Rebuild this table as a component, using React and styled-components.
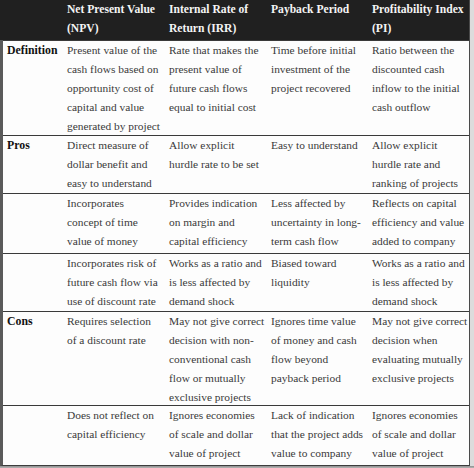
import React from "react";
import styled, { createGlobalStyle } from "styled-components";

const GlobalStyle = createGlobalStyle`
  html, body {
    margin: 0;
    padding: 0;
    background: #ffffff;
    font-family: "Liberation Serif", "Times New Roman", "DejaVu Serif", serif;
  }
`;

const Page = styled.div`
  width: 474px;
  height: 468px;
  overflow: hidden;
  background: linear-gradient(to bottom, #ffffff 0, #ffffff 465px, #8f8f8f 466px, #b5b5b5 468px);
`;

const Table = styled.div`
  width: 470px;
  border-right: 1.5px solid #4a4a4a;
  border-left: 3px solid #5a5a5a;
  border-bottom: 1.5px solid #3c3c3c;
  box-sizing: border-box;
  background: #fdfdfd;
  box-shadow: 4px 0 0 #dcdcdc;
`;

const Row = styled.div`
  display: grid;
  grid-template-columns: 64px 102px 102px 101px 1fr;
  height: ${({ h }) => h}px;
  box-sizing: border-box;
  border-top: ${({ $head }) => ($head ? "none" : "1.5px solid #3a3a3a")};
  background: ${({ $head }) => ($head ? "#202020" : "transparent")};
  margin-left: ${({ $head }) => ($head ? "-3px" : "0")};
  padding-left: ${({ $head }) => ($head ? "3px" : "0")};
`;

const Cell = styled.div`
  white-space: pre-line;
  font-size: ${({ $head }) => ($head ? "11.6px" : "11.4px")};
  line-height: 19px;
  color: ${({ $head }) => ($head ? "#f4f4f4" : "#3a3a3a")};
  font-weight: ${({ $head }) => ($head ? "bold" : "normal")};
`;

const Label = styled.div`
  font-size: 11.8px;
  line-height: 19px;
  font-weight: bold;
  color: #111111;
  padding-left: 4px;
`;

const rows = [
  {
    h: 95,
    label: "Definition",
    cells: [
      "Present value of the\ncash flows based on\nopportunity cost of\ncapital and value\ngenerated by project",
      "Rate that makes the\npresent value of\nfuture cash flows\nequal to initial cost",
      "Time before initial\ninvestment of the\nproject recovered",
      "Ratio between the\ndiscounted cash\ninflow to the initial\ncash outflow",
    ],
  },
  {
    h: 58,
    label: "Pros",
    cells: [
      "Direct measure of\ndollar benefit and\neasy to understand",
      "Allow explicit\nhurdle rate to be set",
      "Easy to understand",
      "Allow explicit\nhurdle rate and\nranking of projects",
    ],
  },
  {
    h: 60,
    label: "",
    cells: [
      "Incorporates\nconcept of time\nvalue of money",
      "Provides indication\non margin and\ncapital efficiency",
      "Less affected by\nuncertainty in long-\nterm cash flow",
      "Reflects on capital\nefficiency and value\nadded to company",
    ],
  },
  {
    h: 58,
    label: "",
    cells: [
      "Incorporates risk of\nfuture cash flow via\nuse of discount rate",
      "Works as a ratio and\nis less affected by\ndemand shock",
      "Biased toward\nliquidity",
      "Works as a ratio and\nis less affected by\ndemand shock",
    ],
  },
  {
    h: 94,
    label: "Cons",
    cells: [
      "Requires selection\nof a discount rate",
      "May not give correct\ndecision with non-\nconventional cash\nflow or mutually\nexclusive projects",
      "Ignores time value\nof money and cash\nflow beyond\npayback period",
      "May not give correct\ndecision when\nevaluating mutually\nexclusive projects",
    ],
  },
  {
    h: 60,
    label: "",
    cells: [
      "Does not reflect on\ncapital efficiency",
      "Ignores economies\nof scale and dollar\nvalue of project",
      "Lack of indication\nthat the project adds\nvalue to company",
      "Ignores economies\nof scale and dollar\nvalue of project",
    ],
  },
];

const headers = [
  "Net Present Value\n(NPV)",
  "Internal Rate of\nReturn (IRR)",
  "Payback Period",
  "Profitability Index\n(PI)",
];

export default function App() {
  return (
    <Page>
      <GlobalStyle />
      <Table>
        <Row h={40} $head>
          <div />
          {headers.map((t) => (
            <Cell key={t} $head>
              {t}
            </Cell>
          ))}
        </Row>
        {rows.map((r, i) => (
          <Row key={i} h={r.h}>
            <Label>{r.label}</Label>
            {r.cells.map((c, j) => (
              <Cell key={j}>{c}</Cell>
            ))}
          </Row>
        ))}
      </Table>
    </Page>
  );
}
